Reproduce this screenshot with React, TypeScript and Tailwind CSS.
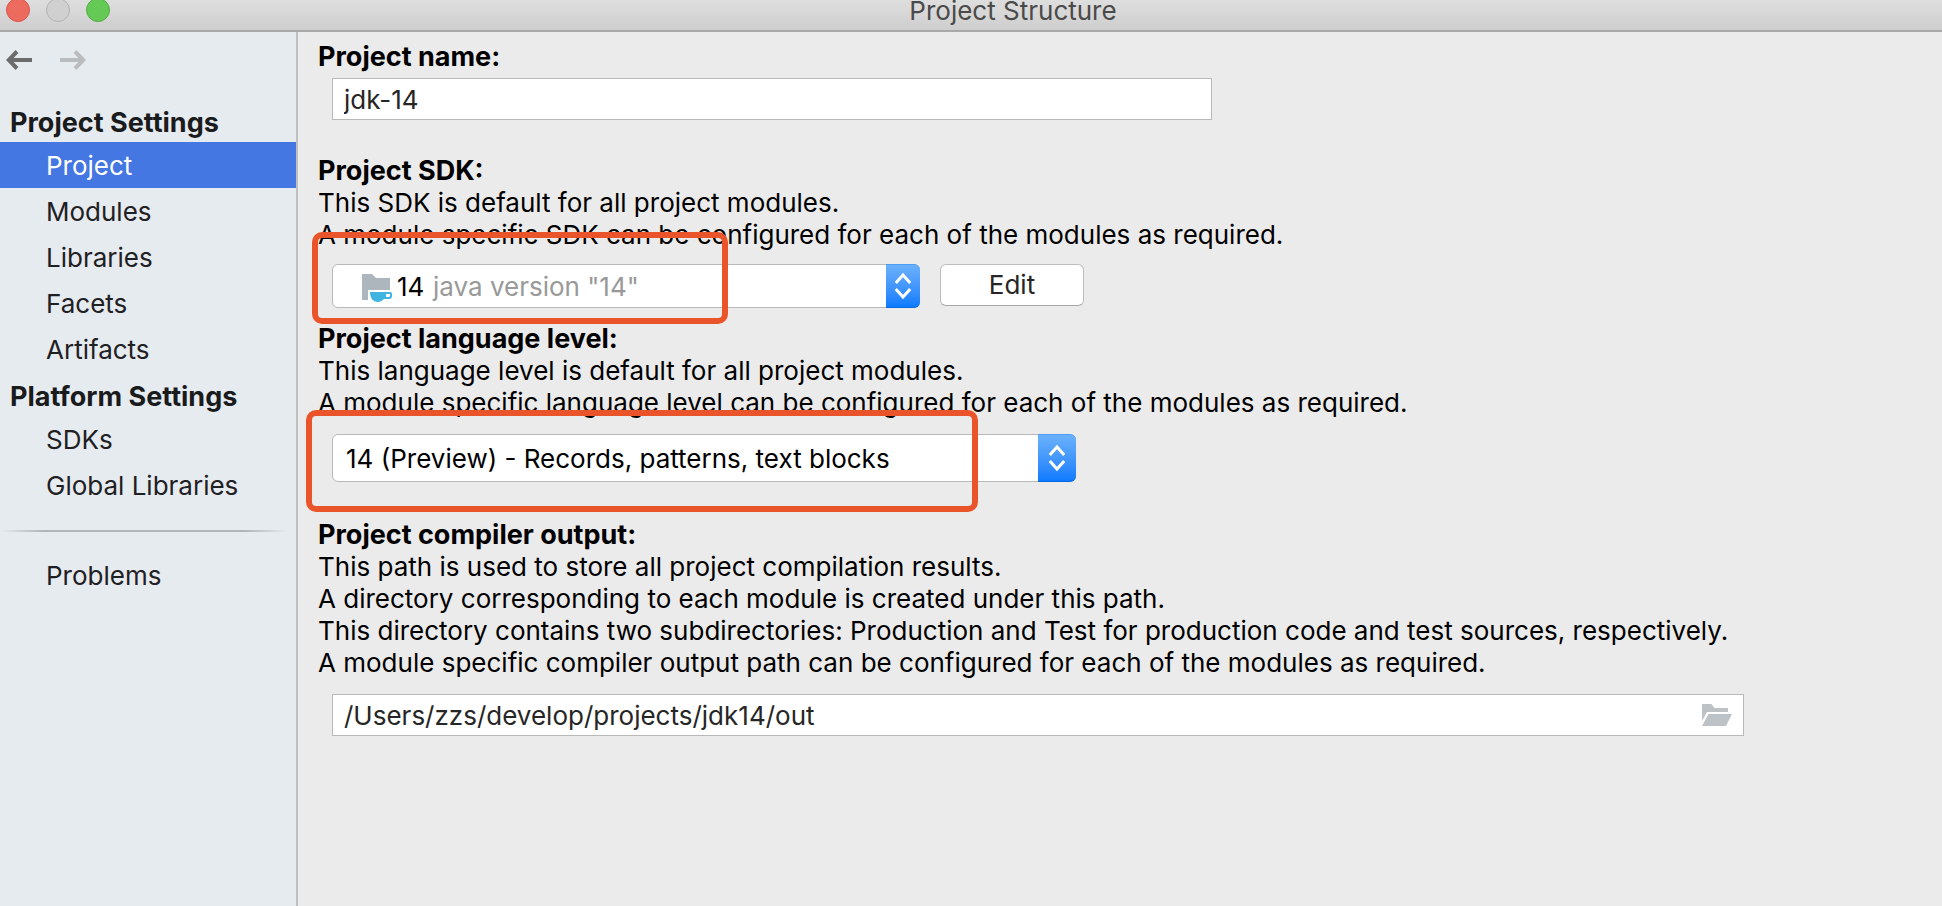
import { useState } from "react";
import type { ReactNode } from "react";
import clsx from "clsx";

const projectItems = ["Project", "Modules", "Libraries", "Facets", "Artifacts"];
const platformItems = ["SDKs", "Global Libraries"];

const TitleBar = () => (
	<header className="relative h-8 shrink-0 border-b-2 border-[#a9a9a9] bg-linear-to-b from-[#dedede] to-[#cecece]">
		<div className="absolute -top-0.5 left-1.5 flex gap-4">
			<button type="button" aria-label="Close" className="size-6 rounded-full border border-[#d9564d] bg-[#ed6a5f]" />
			<button type="button" aria-label="Minimize" className="size-6 rounded-full border border-[#b2b2b2] bg-[#d0d0d0]" />
			<button type="button" aria-label="Zoom" className="size-6 rounded-full border border-[#57ab46] bg-[#65c956]" />
		</div>
		<h1 className="pl-[84px] text-center leading-[22px] text-[#4a4a4a]">Project Structure</h1>
	</header>
);

const Arrow = ({ flip = false }: { flip?: boolean }) => (
	<svg viewBox="0 0 26 20" className={clsx("h-5 w-[26px]", flip && "-scale-x-100")} fill="none" stroke="currentColor" strokeWidth="4">
		<path d="M26 10H4" />
		<path d="M11 1.5 2.8 10l8.2 8.5" />
	</svg>
);

type NavItemProps = {
	label: string;
	active: string;
	onSelect: (label: string) => void;
};

const NavItem = ({ label, active, onSelect }: NavItemProps) => (
	<button
		type="button"
		onClick={() => onSelect(label)}
		className={clsx(
			"block h-[46px] w-full pl-[46px] text-left leading-12",
			label === active ? "bg-[#4477e2] text-white" : "text-[#1f2023]",
		)}
	>
		{label}
	</button>
);

const NavHeading = ({ children }: { children: ReactNode }) => (
	<h2 className="h-11 pt-1 pl-2.5 text-[27px] leading-[42px] font-bold text-[#1a1b1d]">{children}</h2>
);

const Sidebar = () => {
	const [active, setActive] = useState("Project");

	return (
		<nav className="w-[298px] shrink-0 border-r-2 border-[#bfbfbf] bg-[#e6ebef]">
			<div className="flex h-[66px] gap-7 pt-[18px] pl-1.5">
				<button type="button" aria-label="Back" className="h-5 text-[#6c6c6c]">
					<Arrow />
				</button>
				<button type="button" aria-label="Forward" className="h-5 text-[#bbbcbe]">
					<Arrow flip />
				</button>
			</div>
			<NavHeading>Project Settings</NavHeading>
			{projectItems.map((label) => (
				<NavItem key={label} label={label} active={active} onSelect={setActive} />
			))}
			<NavHeading>Platform Settings</NavHeading>
			{platformItems.map((label) => (
				<NavItem key={label} label={label} active={active} onSelect={setActive} />
			))}
			<div className="mt-[22px] mr-2 mb-5 h-0.5 bg-[linear-gradient(to_right,transparent,#b1b5b8_15%,#b1b5b8_85%,transparent)]" />
			<NavItem label="Problems" active={active} onSelect={setActive} />
		</nav>
	);
};

const Stepper = ({ className }: { className: string }) => (
	<span
		className={clsx(
			"pointer-events-none absolute inset-y-0 right-0 flex items-center justify-center rounded-r-md border-y border-t-[#4c9df5] border-b-[#0a68e0] bg-linear-to-b from-[#6bb1fb] to-[#0a7bff]",
			className,
		)}
	>
		<svg viewBox="0 0 18 28" className="h-7 w-[18px]" fill="none" stroke="white" strokeWidth="3">
			<path d="M1.8 11 9 3l7.2 8" />
			<path d="M1.8 17 9 25l7.2-8" />
		</svg>
	</span>
);

const SdkIcon = () => (
	<svg viewBox="0 0 30 28" className="pointer-events-none absolute top-[10px] left-[30px] h-7 w-[30px]">
		<path d="M0 0h10l4 4h14v22H0z" fill="#adb6bd" />
		<path d="M6 16h24v12H6z" fill="white" />
		<path
			fillRule="evenodd"
			d="M8 18h20a2 2 0 0 1 2 2v2a3 3 0 0 1-3 3h-5c-2 2-4 3-6 3-5 0-8-4-8-10zm16 2v3h2.5a1.5 1.5 0 0 0 1.5-1.5V20z"
			fill="#3fb4e0"
		/>
	</svg>
);

const FolderIcon = () => (
	<svg viewBox="0 0 30 22" className="h-[22px] w-[30px]" fill="#bcc2c6">
		<path d="M0 0h9.500l3 4H26v4H5L0 17z" />
		<path d="M6.500 10H30l-6 12H0z" />
	</svg>
);

const FieldLabel = ({ htmlFor, children }: { htmlFor: string; children: ReactNode }) => (
	<label htmlFor={htmlFor} className="block text-[27px] leading-8 font-bold">
		{children}
	</label>
);

export default function App() {
	return (
		<div className="flex min-h-screen flex-col bg-[#ebebeb] font-['Inter',sans-serif] text-[26px] leading-8 text-black">
			<TitleBar />
			<div className="flex grow">
				<Sidebar />
				<main className="min-w-0 grow pt-[9px] pr-6 pl-5">
					<section>
						<FieldLabel htmlFor="name">Project name:</FieldLabel>
						<input
							id="name"
							defaultValue="jdk-14"
							className="mt-[5px] ml-3.5 block h-[42px] w-full max-w-[880px] border border-[#b9b9b9] bg-white px-[11px] text-[#262626] outline-none"
						/>
					</section>

					<section className="mt-[35px]">
						<FieldLabel htmlFor="sdk">Project SDK:</FieldLabel>
						<p>This SDK is default for all project modules.</p>
						<p>A module specific SDK can be configured for each of the modules as required.</p>
						<div className="mt-[13px] ml-3.5 flex items-start gap-5">
							<div className="relative h-11 w-[588px]">
								<select
									id="sdk"
									className="h-full w-full appearance-none rounded-md border border-[#b9b9b9] bg-white pt-0.5 pl-16 outline-none"
								>
									<option>14</option>
								</select>
								<SdkIcon />
								<span className="pointer-events-none absolute top-0 left-[101px] leading-[46px] text-[#999]">
									java version "14"
								</span>
								<Stepper className="w-[34px]" />
								<div className="pointer-events-none absolute -top-8 -left-5 h-[92px] w-[416px] rounded-[10px] border-6 border-[#e9542b]" />
							</div>
							<button
								type="button"
								className="h-[42px] w-36 rounded-md border border-[#bcbcbc] border-b-[#a8a8a8] bg-white text-[#262626]"
							>
								Edit
							</button>
						</div>
					</section>

					<section className="mt-[15px]">
						<FieldLabel htmlFor="level">Project language level:</FieldLabel>
						<p>This language level is default for all project modules.</p>
						<p>A module specific language level can be configured for each of the modules as required.</p>
						<div className="relative mt-[15px] ml-3.5 h-12 w-[744px]">
							<select
								id="level"
								className="h-full w-full appearance-none rounded-md border border-[#b9b9b9] bg-white pt-0.5 pl-[13px] outline-none"
							>
								<option>14 (Preview) - Records, patterns, text blocks</option>
							</select>
							<Stepper className="w-[38px]" />
							<div className="pointer-events-none absolute -top-6 -left-[26px] h-[102px] w-[672px] rounded-[10px] border-6 border-[#e9542b]" />
						</div>
					</section>

					<section className="mt-[37px]">
						<FieldLabel htmlFor="output">Project compiler output:</FieldLabel>
						<p>This path is used to store all project compilation results.</p>
						<p>A directory corresponding to each module is created under this path.</p>
						<p>
							This directory contains two subdirectories: Production and Test for production code and test sources,
							respectively.
						</p>
						<p>A module specific compiler output path can be configured for each of the modules as required.</p>
						<div className="mt-[15px] ml-3.5 flex h-[42px] max-w-[1412px] items-center border border-[#b9b9b9] bg-white pr-[11px]">
							<input
								id="output"
								defaultValue="/Users/zzs/develop/projects/jdk14/out"
								className="h-full min-w-0 grow px-[11px] text-[#262626] outline-none"
							/>
							<button type="button" aria-label="Browse">
								<FolderIcon />
							</button>
						</div>
					</section>
				</main>
			</div>
		</div>
	);
}
